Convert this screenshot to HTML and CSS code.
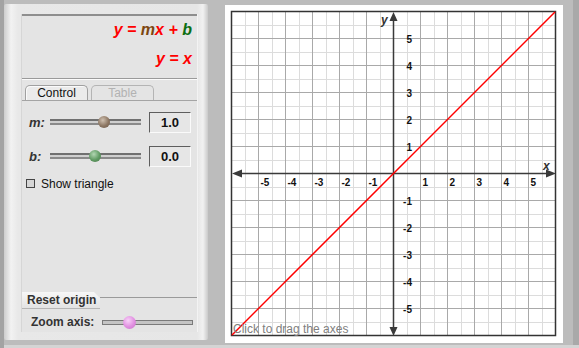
FILE: index.html
```html
<!DOCTYPE html>
<html>
<head>
<meta charset="utf-8">
<title>Slope intercept</title>
<link rel="stylesheet" href="styles.css">
</head>
<body>
<div class="app">
  <div class="main">
    <div class="side">
      <div class="panel">
        <div class="formula">
          <div class="eq"><span class="r">y</span> <span class="r">=</span> <span class="m">m</span><span class="r">x</span> <span class="r">+</span> <span class="g">b</span></div>
          <div class="eq"><span class="r">y = x</span></div>
        </div>
        <div class="tabs">
          <div class="tab active">Control</div>
          <div class="tab">Table</div>
        </div>
        <div class="controls">
          <div class="row">
            <span class="lbl">m:</span>
            <div class="slider"><span class="thumb thumb-m" style="left:48px"></span></div>
            <div class="val">1.0</div>
          </div>
          <div class="row row2">
            <span class="lbl">b:</span>
            <div class="slider"><span class="thumb thumb-b" style="left:39px"></span></div>
            <div class="val">0.0</div>
          </div>
          <label class="check"><span class="box"></span>Show triangle</label>
        </div>
        <div class="reset-row">
          <div class="reset">Reset origin</div>
          <div class="reset-line"></div>
        </div>
        <div class="zoom-row">
          <span class="zoom-lbl">Zoom axis:</span>
          <div class="slider thin"><span class="thumb thumb-z" style="left:20px"></span></div>
        </div>
      </div>
    </div>
    <div class="card">
      <svg class="graph" width="338" height="338" viewBox="225 5 338 338" xmlns="http://www.w3.org/2000/svg">
        <defs>
          <clipPath id="plot"><rect x="231.5" y="11.5" width="324" height="324"/></clipPath>
        </defs>
        <path stroke="#dcdcdc" stroke-width="1" fill="none" d="M245.5 11.5V335.5M272.5 11.5V335.5M299.5 11.5V335.5M326.5 11.5V335.5M353.5 11.5V335.5M380.5 11.5V335.5M407.5 11.5V335.5M434.5 11.5V335.5M461.5 11.5V335.5M488.5 11.5V335.5M515.5 11.5V335.5M542.5 11.5V335.5M231.5 25.5H555.5M231.5 52.5H555.5M231.5 79.5H555.5M231.5 106.5H555.5M231.5 133.5H555.5M231.5 160.5H555.5M231.5 187.5H555.5M231.5 214.5H555.5M231.5 241.5H555.5M231.5 268.5H555.5M231.5 295.5H555.5M231.5 322.5H555.5"/>
        <path stroke="#a9a9a9" stroke-width="1" fill="none" d="M258.5 11.5V335.5M285.5 11.5V335.5M312.5 11.5V335.5M339.5 11.5V335.5M366.5 11.5V335.5M420.5 11.5V335.5M447.5 11.5V335.5M474.5 11.5V335.5M501.5 11.5V335.5M528.5 11.5V335.5M231.5 38.5H555.5M231.5 65.5H555.5M231.5 92.5H555.5M231.5 119.5H555.5M231.5 146.5H555.5M231.5 200.5H555.5M231.5 227.5H555.5M231.5 254.5H555.5M231.5 281.5H555.5M231.5 308.5H555.5"/>
        <rect x="231.5" y="11.5" width="324" height="324" fill="none" stroke="#333" stroke-width="1.5"/>
        <g stroke="#3a3a3a" stroke-width="1.5">
          <line x1="240" y1="173.5" x2="548" y2="173.5"/>
          <line x1="393.5" y1="20" x2="393.5" y2="328"/>
        </g>
        <g fill="#3a3a3a">
          <polygon points="232,173.5 242,169.5 242,177.5"/>
          <polygon points="556,173.5 546,169.5 546,177.5"/>
          <polygon points="393.5,12 389.5,21 397.5,21"/>
          <polygon points="393.5,336 389.5,327 397.5,327"/>
        </g>
        <line clip-path="url(#plot)" x1="231.5" y1="335.5" x2="555.5" y2="11.5" stroke="#ff0000" stroke-width="1.5"/>
        <g class="tick">
          <text x="260.5" y="186">-5</text>
          <text x="287.5" y="186">-4</text>
          <text x="314.5" y="186">-3</text>
          <text x="341.5" y="186">-2</text>
          <text x="368.5" y="186">-1</text>
          <text x="422.5" y="186">1</text>
          <text x="449.5" y="186">2</text>
          <text x="476.5" y="186">3</text>
          <text x="503.5" y="186">4</text>
          <text x="530.5" y="186">5</text>
        </g>
        <g class="tick" text-anchor="end">
          <text x="412" y="42.5">5</text>
          <text x="412" y="69.5">4</text>
          <text x="412" y="96.5">3</text>
          <text x="412" y="123.5">2</text>
          <text x="412" y="150.5">1</text>
          <text x="412" y="204.5">-1</text>
          <text x="412" y="231.5">-2</text>
          <text x="412" y="258.5">-3</text>
          <text x="412" y="285.5">-4</text>
          <text x="412" y="312.5">-5</text>
        </g>
        <text class="axis-name" x="381" y="24">y</text>
        <text class="axis-name" x="543" y="170">x</text>
        <text class="hint" x="233" y="333">Click to drag the axes</text>
      </svg>
    </div>
    <div class="edge"></div>
  </div>
  <div class="foot"></div>
</div>
</body>
</html>
```

FILE: styles.css
```css
* { box-sizing: border-box; }
html, body { margin: 0; padding: 0; }
body {
  width: 579px;
  height: 348px;
  overflow: hidden;
  background: #bcbcbc;
  font-family: "Liberation Sans", Arial, sans-serif;
}
.app {
  width: 579px;
  height: 348px;
  display: flex;
  flex-direction: column;
  border-left: 4px solid #a3a3a3;
  background: #bcbcbc;
}
.main {
  display: flex;
  height: 345px;
}
.foot {
  height: 3px;
  background: #d4d4d4;
}
.side {
  width: 204px;
  height: 336px;
  margin-top: 4px;
  padding: 10px 11px 8px 18px;
  background: linear-gradient(to right, #cdcdcd 0, #f2f2f2 7px, #e8e8e8 14px, #e6e6e6 calc(100% - 11px), #f1f1f1 calc(100% - 5px), #c9c9c9 100%);
  border-radius: 2px;
}
.panel {
  height: 318px;
  display: flex;
  flex-direction: column;
  background: #e4e4e4;
  border-top: 2px solid #8e8e8e;
  box-shadow: -1px 0 0 #d6d6d6, 1px 0 0 #f3f3f3;
}
.formula {
  padding: 4px 5px 9px;
  text-align: right;
  border-bottom: 1px solid #9a9a9a;
  box-shadow: 0 1px 0 #fbfbfb;
  font-style: italic;
  font-weight: bold;
  font-size: 16px;
  line-height: 20px;
}
.eq + .eq { margin-top: 9px; }
.r { color: #ff0000; }
.m { color: #7c4710; }
.g { color: #0c6e12; }

.tabs {
  display: flex;
  gap: 3px;
  padding-left: 3px;
  margin-top: 6px;
  height: 16px;
  border-bottom: 1px solid #a4a4a4;
}
.tab {
  width: 63px;
  height: 15px;
  border: 1px solid #b4b4b4;
  border-bottom: none;
  border-radius: 5px 5px 0 0;
  font-size: 12px;
  line-height: 14px;
  text-align: center;
  color: #b2b2b2;
  background: #e4e4e4;
}
.tab.active {
  color: #111;
  background: #ebebeb;
  border-color: #a0a0a0;
  box-shadow: inset 1px 1px 0 #fafafa;
}

.controls {
  padding: 10px 0 0 7px;
}
.row {
  display: flex;
  align-items: center;
  height: 22px;
}
.row2 { margin-top: 12px; }
.lbl {
  width: 21px;
  font-style: italic;
  font-weight: bold;
  font-size: 13px;
  color: #333;
}
.slider {
  position: relative;
  width: 91px;
  height: 6px;
  border-top: 2px solid #707070;
  border-bottom: 2px solid #8a8a8a;
  background: #cfcfcf;
}
.slider.thin {
  height: 5px;
  border: 1px solid #7a7a7a;
  background: #c4c4c4;
}
.thumb {
  position: absolute;
  top: 50%;
  width: 12px;
  height: 12px;
  margin-top: -6px;
  border-radius: 50%;
}
.thumb-m {
  background: radial-gradient(circle at 40% 35%, #cfc0b0 0, #8c7662 55%, #6c5848 100%);
}
.thumb-b {
  background: radial-gradient(circle at 40% 35%, #b2d6b2 0, #5f9a62 55%, #4a784c 100%);
}
.thumb-z {
  width: 13px;
  height: 13px;
  margin-top: -6.5px;
  background: radial-gradient(circle at 40% 35%, #f8d2f8 0, #e08ee0 55%, #c870c8 100%);
}
.val {
  width: 42px;
  height: 21px;
  margin-left: 8px;
  border: 1px solid;
  border-color: #5e5e5e #fafafa #fafafa #5e5e5e;
  background: #e6e6e6;
  font-weight: bold;
  font-size: 13px;
  line-height: 19px;
  text-align: center;
  color: #111;
}
.check {
  display: flex;
  align-items: center;
  height: 13px;
  margin: 10px 0 0 -3px;
  font-size: 12px;
  color: #111;
}
.box {
  width: 9px;
  height: 9px;
  margin-right: 6px;
  border: 1px solid #444;
  background: #d6d6d6;
}

.reset-row {
  margin-top: auto;
  display: flex;
  height: 17px;
}
.reset {
  width: 78px;
  height: 17px;
  padding-left: 5px;
  font-weight: bold;
  font-size: 12px;
  line-height: 17px;
  color: #333;
  background: linear-gradient(#f7f7f7, #e3e3e3);
  border-bottom: 1px solid #b6b6b6;
  clip-path: polygon(0 0, 72px 0, 78px 6px, 78px 100%, 0 100%);
}
.reset-line {
  flex: 1;
  margin-top: 5px;
  border-top: 1px solid #9a9a9a;
}
.zoom-row {
  display: flex;
  align-items: center;
  height: 23px;
  padding: 3px 0 0 9px;
}
.zoom-lbl {
  width: 71px;
  font-weight: bold;
  font-size: 12px;
  color: #333;
}

.card {
  width: 338px;
  height: 338px;
  margin: 5px 0 0 17px;
  background: #fff;
}
.graph { display: block; }
.edge {
  width: 6px;
  margin-left: 10px;
  background: #a9a9a9;
}
.tick text {
  font-family: "Liberation Sans", Arial, sans-serif;
  font-weight: bold;
  font-size: 10px;
  fill: #111;
}
.axis-name {
  font-family: "Liberation Sans", Arial, sans-serif;
  font-weight: bold;
  font-style: italic;
  font-size: 12px;
  fill: #333;
}
.hint {
  font-family: "Liberation Sans", Arial, sans-serif;
  font-size: 12px;
  fill: #808080;
}
```
